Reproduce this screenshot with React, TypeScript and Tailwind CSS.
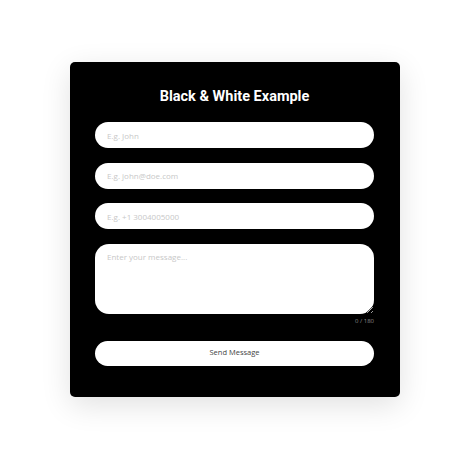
import React from "react";

export default function App() {
  const field =
    "w-full h-[26px] rounded-full bg-white px-[12px] text-[8px] text-[#333] placeholder:text-[#c8c8c8] outline-none border-0";
  return (
    <div className="w-[474px] h-[454px] bg-white flex justify-start pl-[70px] pt-[62px]" style={{ fontFamily: '"Open Sans", sans-serif' }}>
      <div className="w-[330px] h-[335px] bg-black rounded-[5px] shadow-[0_8px_30px_rgba(0,0,0,0.12)] pl-[25px] pr-[26px] pt-[25px] flex flex-col">
        <h1
          className="text-white text-center font-bold text-[14.5px] leading-[20px] mb-[15px]"
          style={{ fontFamily: 'Roboto, sans-serif' }}
        >
          Black &amp; White Example
        </h1>
        <div className="flex flex-col gap-[14.5px]">
          <input className={field} placeholder="E.g. John" />
          <input className={field} placeholder="E.g. john@doe.com" />
          <input className={field} placeholder="E.g. +1 3004005000" />
          <div className="flex flex-col">
            <textarea
              className="w-full h-[70px] rounded-[14px] bg-white px-[12px] py-[6px] text-[8px] leading-[14px] text-[#333] placeholder:text-[#c8c8c8] outline-none border-0 block"
              placeholder="Enter your message..."
            />
            <div className="text-right text-[6px] leading-[10px] text-[#8a8a8a] mt-[2px]">0 / 180</div>
          </div>
        </div>
        <button className="mt-[15px] w-full h-[25px] rounded-full bg-white text-[7.5px] text-[#444]">
          Send Message
        </button>
      </div>
    </div>
  );
}
